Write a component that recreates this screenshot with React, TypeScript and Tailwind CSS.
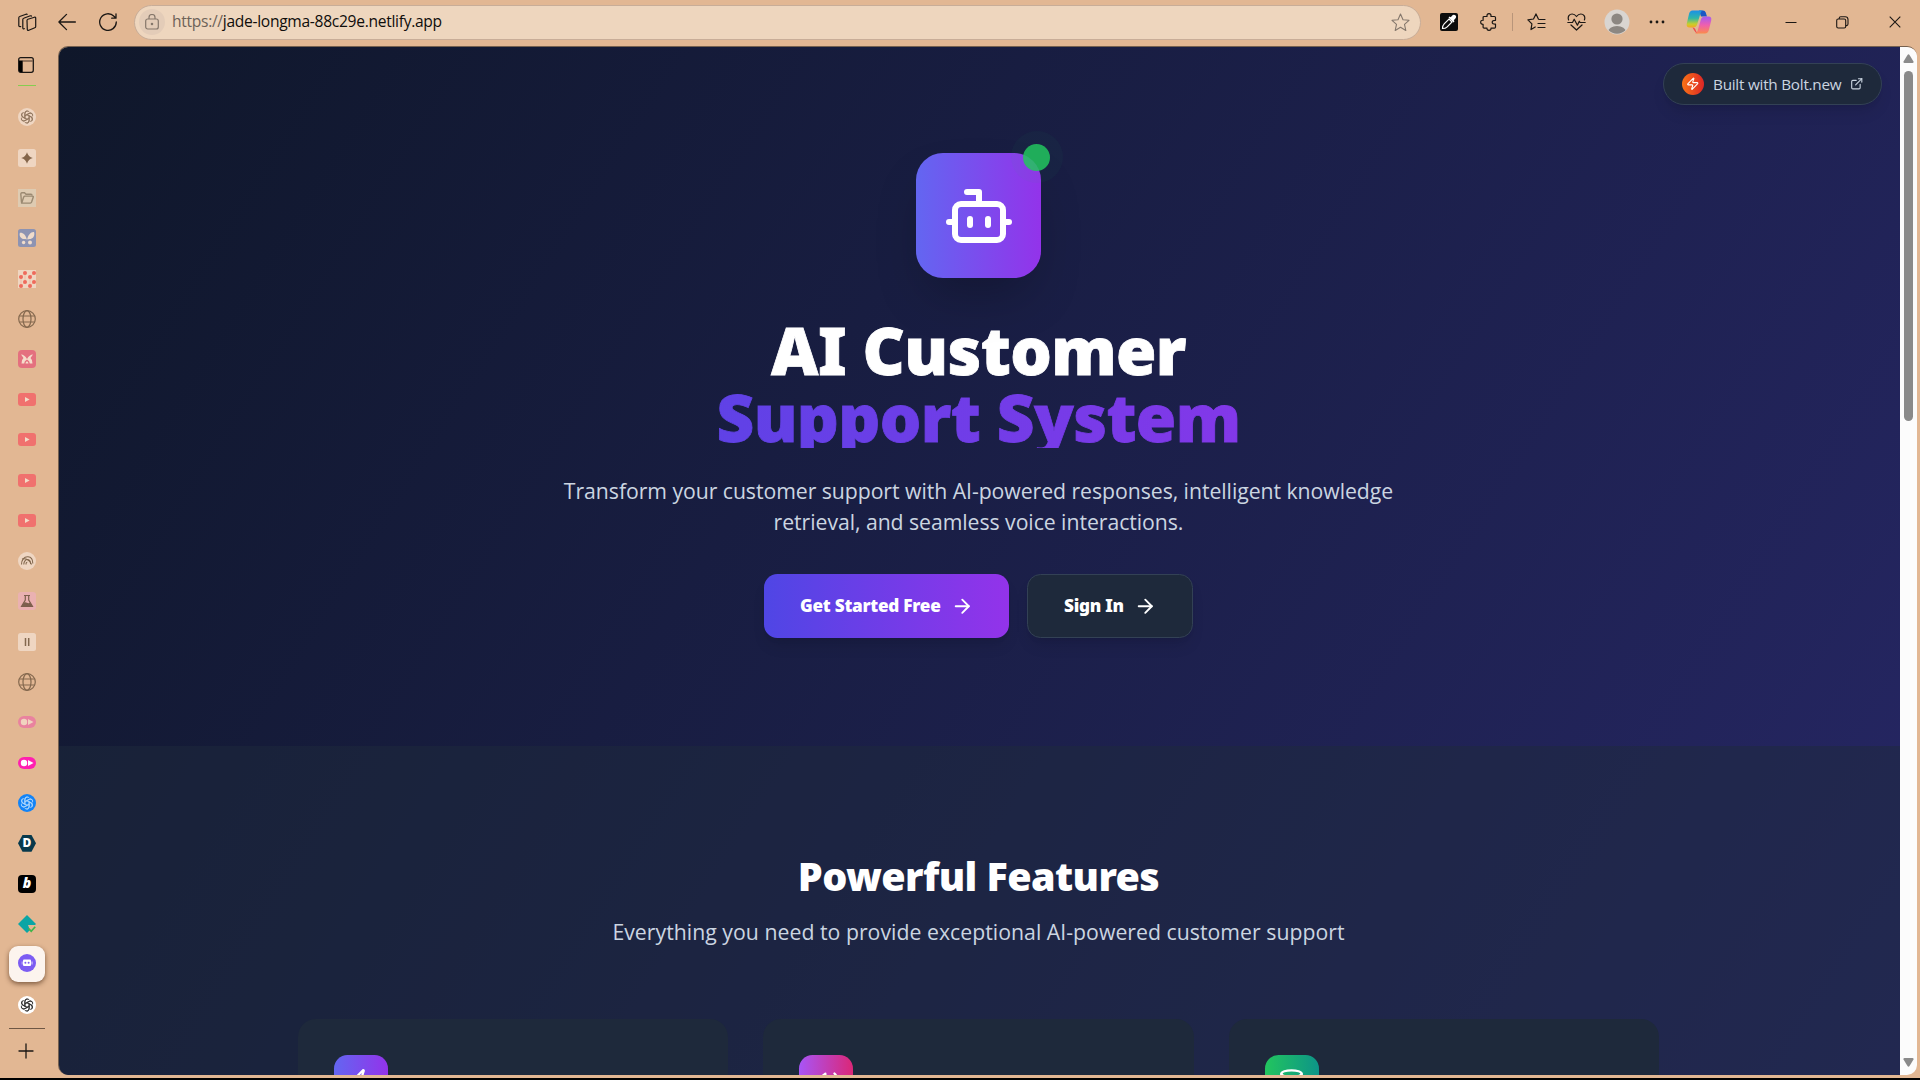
import type { ReactNode } from 'react'
import { ArrowRight, Bot, Database, ExternalLink, Plus, Zap } from 'lucide-react'

const YoutubeIcon = () => (
  <svg width="18" height="13" viewBox="0 0 18 13">
    <rect width="18" height="13" rx="3" fill="#f0716e" />
    <path d="M7 4v5l4.6-2.5z" fill="#f1dcc8" />
  </svg>
)

const GlobeIcon = () => (
  <svg width="18" height="18" viewBox="0 0 18 18" fill="none" stroke="#84684e" strokeWidth="1.2">
    <circle cx="9" cy="9" r="8.3" />
    <ellipse cx="9" cy="9" rx="4" ry="8.3" />
    <path d="M1.5 6h15M1.5 12h15" />
  </svg>
)

function KnotIcon({ bg, color }: { bg: string; color: string }) {
  return (
    <svg width="18" height="18" viewBox="0 0 18 18" fill="none">
      <circle cx="9" cy="9" r="9" fill={bg} />
      <g stroke={color} strokeWidth="1" strokeLinejoin="round">
        {[0, 60, 120, 180, 240, 300].map((angle) => (
          <path key={angle} transform={`rotate(${angle} 9 9)`} d="M6.9 10.2V5.4a2.5 2.5 0 0 1 4.4-1.5M6.9 7.8l4.1-2.4a2.5 2.5 0 0 1 3.5 1" />
        ))}
      </g>
    </svg>
  )
}

function PlayPillIcon({ bg, color }: { bg: string; color: string }) {
  return (
    <svg width="18" height="12" viewBox="0 0 18 12">
      <rect width="18" height="12" rx="6" fill={bg} />
      <circle cx="6" cy="6" r="3.2" fill={color} />
      <path d="M10 3v6l5.5-3z" fill={color} />
    </svg>
  )
}

const SparkleIcon = () => (
  <svg width="18" height="18" viewBox="0 0 18 18">
    <rect width="18" height="18" rx="2.5" fill="#efd6c2" />
    <path d="M9 3.2Q10.2 7.8 14.8 9 10.2 10.2 9 14.8 7.8 10.2 3.2 9 7.8 7.8 9 3.2z" fill="#84654a" />
  </svg>
)

const FolderIcon = () => (
  <svg width="18" height="18" viewBox="0 0 18 18" fill="none">
    <rect width="18" height="18" fill="#decbb2" />
    <path d="M3.5 13.5 2.8 5q0-1 1-1.2h2.7l1.5 1.4h5q1 0 1 1M3.7 14l2-6q.4-.9 1.3-.9h7.5q1 0 .8 1l-1.7 5q-.4 1-1.3 1H4q-.7 0-.3-.1z" stroke="#9b8a72" strokeWidth="1.4" />
  </svg>
)

const ButterflyIcon = () => (
  <svg width="18" height="18" viewBox="0 0 18 18">
    <rect width="18" height="18" rx="2.5" fill="#8d93b2" />
    <g fill="#f0dccb">
      <path d="M8.8 10.5C8 6 5 3.5 2 3.8c-1 2 0 5.7 3.5 6.2 1.5.2 2.5.1 3.3.5zM9.2 10.5C10 6 13 2.500 16 3c1 2.500-.2 6.300-3.500 7-1.500.2-2.500.1-3.300.5z" />
      <circle cx="5.6" cy="13.5" r="1.7" />
      <circle cx="12" cy="13.5" r="2" />
    </g>
  </svg>
)

const DotsGridIcon = () => (
  <svg width="18" height="18" viewBox="0 0 18 18">
    <rect width="18" height="18" fill="#efd6c2" />
    <path d="M3 7 7 3M3 16l4-4M12 7l4-4M12 16l4-4M3 7v9M12 7v9M7 3v9" stroke="#f2b29c" strokeWidth="0.7" />
    <g fill="#ee6a5b">
      <circle cx="7" cy="3" r="2" />
      <circle cx="16" cy="3" r="2" />
      <circle cx="3" cy="7" r="2" />
      <circle cx="12" cy="7" r="2" />
      <circle cx="7" cy="12" r="2" />
      <circle cx="16" cy="12" r="2" />
      <circle cx="3" cy="16" r="2" />
      <circle cx="12" cy="16" r="2" />
    </g>
  </svg>
)

const PinkMIcon = () => (
  <svg width="18" height="18" viewBox="0 0 18 18">
    <rect width="18" height="18" rx="4" fill="#e4707f" />
    <path d="M3 4.500q3.500 0 6 4.500 2.500-4.500 6-4.500L12.500 8q2 1.500 2 5.500h-2.700q0-2.500-2.800-4-2.800 1.500-2.800 4H3.500q0-4 2-5.500z" fill="#f5dccb" />
    <path d="M7.5 13.500q.2-1.800 1.500-2.300 1.300.5 1.500 2.300z" fill="#f5dccb" />
  </svg>
)

const ArcsIcon = () => (
  <svg width="18" height="18" viewBox="0 0 18 18" fill="none" stroke="#84694f" strokeWidth="1.1">
    <circle cx="9" cy="9" r="9" fill="#efd6c2" stroke="none" />
    <path d="M3.5 12.5C3.5 8 6 4.5 10 4.8c3 .2 4.8 3 4.8 6.7M5.8 12.5c0-3 1.7-5.2 4-4.9 1.9.2 2.8 2 2.800 4.400M8 12.500c0-1.500.4-2.400 1.300-2.300" />
    <path d="M4 7c4-1 8 1 9.5 5.5" />
  </svg>
)

const FlaskIcon = () => (
  <svg width="18" height="18" viewBox="0 0 18 18" fill="none">
    <rect width="18" height="18" rx="3" fill="#eab1b1" />
    <path d="M6 3.5h6M7.3 3.5V8L3.5 14.5h11L10.7 8V3.5" stroke="#7d5f4d" strokeWidth="1.2" />
    <path d="M6 10.5q1.5-.8 3 .2t3-.2l2.5 4h-11z" fill="#7d5f4d" />
  </svg>
)

const PauseIcon = () => (
  <svg width="18" height="18" viewBox="0 0 18 18">
    <rect width="18" height="18" rx="2.5" fill="#efd6c2" />
    <path d="M7.5 5v8M10.7 5v8" stroke="#84694f" strokeWidth="1.5" />
  </svg>
)

const HexDIcon = () => (
  <span className="grid h-[18px] w-[18px] place-items-center bg-[#07394c] text-[12px] font-extrabold text-white [clip-path:polygon(25%_3%,75%_3%,100%_50%,75%_97%,25%_97%,0_50%)]">
    D
  </span>
)

const BoltBIcon = () => (
  <span className="grid h-[18px] w-[18px] place-items-center rounded-[4px] bg-black pb-px text-[14px] font-extrabold leading-none text-white italic">
    b
  </span>
)

const DiamondIcon = () => (
  <svg width="18" height="18" viewBox="0 0 18 18" fill="none">
    <path d="M9 0l9 9-9 9-9-9z" fill="#0aa5a5" />
    <path d="M10 10h8v8h-5z" fill="#e2b793" />
    <path d="M10.5 13.5l2.7 2.7 4-4.4" stroke="#3fb54a" strokeWidth="1.7" />
  </svg>
)

const BotTabIcon = () => (
  <svg width="18" height="18" viewBox="0 0 18 18">
    <circle cx="9" cy="9" r="9" fill="#7c5cf2" />
    <path d="M3.5 7.5h11.500v3H3.500z" fill="#fff" opacity="0.4" />
    <rect x="5" y="5.5" width="8" height="6.5" rx="1" fill="#fff" />
    <circle cx="7.4" cy="8.7" r="1" fill="#7c5cf2" />
    <circle cx="10.6" cy="8.7" r="1" fill="#7c5cf2" />
  </svg>
)

const tabs: { id: string; icon: ReactNode; active?: boolean }[] = [
  { id: 'chat', icon: <KnotIcon bg="#efd6c2" color="#937860" /> },
  { id: 'sparkle', icon: <SparkleIcon /> },
  { id: 'folder', icon: <FolderIcon /> },
  { id: 'butterfly', icon: <ButterflyIcon /> },
  { id: 'dots', icon: <DotsGridIcon /> },
  { id: 'globe-1', icon: <GlobeIcon /> },
  { id: 'pink-m', icon: <PinkMIcon /> },
  { id: 'video-1', icon: <YoutubeIcon /> },
  { id: 'video-2', icon: <YoutubeIcon /> },
  { id: 'video-3', icon: <YoutubeIcon /> },
  { id: 'video-4', icon: <YoutubeIcon /> },
  { id: 'arcs', icon: <ArcsIcon /> },
  { id: 'flask', icon: <FlaskIcon /> },
  { id: 'pause', icon: <PauseIcon /> },
  { id: 'globe-2', icon: <GlobeIcon /> },
  { id: 'pill-1', icon: <PlayPillIcon bg="#e9829f" color="#f0d3bf" /> },
  { id: 'pill-2', icon: <PlayPillIcon bg="#ff1fb0" color="#fff" /> },
  { id: 'knot-blue', icon: <KnotIcon bg="#1283f7" color="#a9d3fb" /> },
  { id: 'hex', icon: <HexDIcon /> },
  { id: 'b', icon: <BoltBIcon /> },
  { id: 'diamond', icon: <DiamondIcon /> },
  { id: 'bot', icon: <BotTabIcon />, active: true },
  { id: 'knot', icon: <KnotIcon bg="#fff" color="#333" /> },
]

const VolumeIcon = () => (
  <svg width="27" height="27" viewBox="0 0 24 24" fill="none" stroke="#fff" strokeWidth="2" strokeLinecap="round" strokeLinejoin="round">
    <path d="M11 5 6 9H2v6h4l5 4z" />
    <path d="M15.54 8.46a5 5 0 0 1 0 7.07M19.07 4.93a10 10 0 0 1 0 14.14" />
  </svg>
)

const features = [
  { id: 'speed', tile: 'bg-linear-to-r/srgb from-[#6366f1] to-[#9333ea]', icon: <Zap size={27} /> },
  { id: 'voice', tile: 'bg-linear-to-r/srgb from-[#a855f7] to-[#db2777]', icon: <VolumeIcon /> },
  { id: 'knowledge', tile: 'bg-linear-to-r/srgb from-[#22c55e] to-[#0d9488]', icon: <Database size={27} /> },
]

function Toolbar() {
  return (
    <header className="flex h-[46px] shrink-0 items-center pb-[2px] text-[#1b1714]">
      <svg className="ml-[18px]" width="19" height="19" viewBox="0 0 19 19" fill="none" stroke="currentColor" strokeWidth="1.2" strokeLinejoin="round">
        <path d="M9 7.5q0-1 .9-1.3l6.600-2q1.200-.3 1.200.9v8.300q0 1-.9 1.300l-6 2.600q-1.300.5-1.500-.8z" />
        <path d="M6.800 15.500q-1.800 1-2-.5V6.500q0-1 .9-1.300l6.600-2.400q1.100-.3 1.300.8" />
        <path d="M3.200 13.500q-2 .5-2.400-.8V4.800q0-1 .9-1.300L8 1.200q1.100-.3 1.400.6" />
      </svg>
      <svg className="ml-[21px]" width="18" height="18" viewBox="0 0 18 18" fill="none" stroke="currentColor" strokeWidth="1.3" strokeLinecap="round" strokeLinejoin="round">
        <path d="M17.4 9H.9M8.500 1.400.9 9l7.600 7.600" />
      </svg>
      <svg className="ml-[23px]" width="18" height="18" viewBox="0 0 18 18" fill="none" stroke="currentColor" strokeWidth="1.3" strokeLinecap="round" strokeLinejoin="round">
        <path d="M17.3 9A8.300 8.300 0 1 1 15 3.300L16.800 5M17 .8V5.200H12.700" />
      </svg>

      <div className="ml-[17px] flex h-[35px] w-[1287px] items-center rounded-full border border-[#c8ad98] bg-[#eed6be] pr-[10px] pl-[4px]">
        <span className="grid h-[26px] w-[26px] place-items-center rounded-full bg-[#e3ccb8] text-[#85776b]">
          <svg width="14" height="16" viewBox="0 0 14 16" fill="none" stroke="currentColor" strokeWidth="1.2">
            <rect x="0.7" y="5" width="12.6" height="10" rx="2" />
            <path d="M4 5V3.5a3 3 0 0 1 6 0V5" />
            <circle cx="7" cy="10" r="0.7" fill="currentColor" />
          </svg>
        </span>
        <span className="ml-[7px] grow text-[15.6px] tracking-[-0.3px] whitespace-nowrap text-[#0f0d0b]">
          <span className="text-[#6d6258]">https://</span>jade-longma-88c29e.netlify.app
        </span>
        <svg width="19" height="19" viewBox="0 0 19 19" fill="none" stroke="#84776c" strokeWidth="1.1" strokeLinejoin="round">
          <path d="M9.500 1l2.500 5.700 6 .6-4.500 4.100 1.300 6.100-5.300-3.200-5.300 3.200 1.300-6.100L1 7.300l6-.6z" />
        </svg>
      </div>

      <svg className="ml-[19px]" width="18" height="18" viewBox="0 0 18 18">
        <rect width="18" height="18" rx="2" fill="#0c0c0c" />
        <path d="M2.500 15.500q0-3 1.700-4.700L9 6l3 3-4.800 4.800Q5.500 15.500 2.500 15.500z" fill="#0c0c0c" stroke="#fff" strokeWidth="1.2" />
        <path d="M8.500 4.500l5 5 1-1.200-.7-1 2-2.300q.9-1.600-.4-2.700t-2.600-.2L10.700 4.200l-1-.8z" fill="#fff" />
      </svg>
      <svg className="ml-[22px]" width="18" height="18" viewBox="0 0 18 18" fill="none" stroke="currentColor" strokeWidth="1.2" strokeLinejoin="round">
        <path d="M4.200 3.500H7q-.3-2.800 2-2.800t2 2.800h3.400q1.100 0 1.100 1.100v2.700q-3.300-.2-3.300 1.900t3.300 1.900v2.900q0 1.100-1.100 1.100H11q.2 2.200-2 2.200t-2-2.200H4.200q-1.100 0-1.100-1.100v-2.700Q.7 11.400.7 9.200t2.400-1.900V4.600q0-1.100 1.100-1.100z" />
      </svg>
      <span className="ml-[14px] h-[18px] w-px bg-[#b8957a]" />
      <svg className="ml-[14px]" width="19" height="18" viewBox="0 0 19 18" fill="none" stroke="currentColor" strokeWidth="1.2" strokeLinejoin="round" strokeLinecap="round">
        <path d="M11.500 6.200 9 .9 6.500 6l-5.600.8 4 4-.9 5.800L8.200 14M12.500 6.500H18M11 10.500h7M11 14.500h7" />
      </svg>
      <svg className="ml-[21px]" width="19" height="18" viewBox="0 0 19 18" fill="none" stroke="currentColor" strokeWidth="1.2" strokeLinejoin="round" strokeLinecap="round">
        <path d="M1.600 7C.3 3.500 2.500 1 5.200 1 7.500 1 8.800 2.600 9.500 3.500 10.200 2.600 11.500 1 13.800 1c2.700 0 4.900 2.500 3.600 6M4 12l5.500 5 5.500-5M.8 9.500h4.700l1.700-3.300 3.200 6 1.900-4 .8 1.300h5.100" />
      </svg>
      <svg className="ml-[18px]" width="26" height="26" viewBox="0 0 26 26">
        <clipPath id="avatar">
          <circle cx="13" cy="13" r="11.8" />
        </clipPath>
        <circle cx="13" cy="13" r="12.5" fill="#d9d5d1" />
        <g clipPath="url(#avatar)" fill="#8c8782">
          <circle cx="13" cy="10" r="5.6" />
          <ellipse cx="13" cy="23" rx="9" ry="6" />
        </g>
      </svg>
      <svg className="ml-[19px]" width="16" height="4" viewBox="0 0 16 4" fill="currentColor">
        <circle cx="2" cy="2" r="1.4" />
        <circle cx="8" cy="2" r="1.4" />
        <circle cx="14" cy="2" r="1.4" />
      </svg>
      <svg className="ml-[21px]" width="26" height="24" viewBox="0 0 26 24">
        <defs>
          <linearGradient id="copilotLeft" x1="0" y1="0" x2="0" y2="1">
            <stop offset="0" stopColor="#1a90e8" />
            <stop offset="0.45" stopColor="#2fb6a8" />
            <stop offset="0.8" stopColor="#c9cf2c" />
            <stop offset="1" stopColor="#f5a623" />
          </linearGradient>
          <linearGradient id="copilotRight" x1="0" y1="0" x2="0" y2="1">
            <stop offset="0" stopColor="#a45bf0" />
            <stop offset="0.5" stopColor="#ee5fb0" />
            <stop offset="1" stopColor="#fb8a4c" />
          </linearGradient>
        </defs>
        <path d="M13 .5h4q2 0 2.700 2l1.300 4h-6z" fill="#1b57c4" />
        <path d="M6.500.5H17q-1.800.3-2.400 2.500l-3.300 11Q10.300 17.500 7 17.500H3.500Q0 17.500.8 13.500L3 4q.8-3.500 3.500-3.500z" fill="url(#copilotLeft)" />
        <path d="M6.500 17.500q2.500 0 3.300 3 .8 3 3 3-3.300 0-4.200-2.500z" fill="#ef4b4b" />
        <path d="M19 6.500h3.500q3.500 0 2.700 4L23 19.500q-.9 4-4 4H9q1.800-.3 2.500-2.500l3.300-11.300Q15.800 6.500 19 6.500z" fill="url(#copilotRight)" />
      </svg>

      <svg className="ml-[73px]" width="12" height="12" viewBox="0 0 12 12" stroke="currentColor">
        <path d="M.5 6.500h11" />
      </svg>
      <svg className="ml-[39px]" width="13" height="13" viewBox="0 0 13 13" fill="none" stroke="currentColor" strokeWidth="1.1">
        <rect x="0.7" y="3" width="9" height="9" rx="1.5" />
        <path d="M3.200 3V2.300q0-1.500 1.600-1.500h4.400q2.800 0 2.800 2.800V8q0 1.600-1.500 1.600H9.700" />
      </svg>
      <svg className="ml-[40px]" width="12" height="12" viewBox="0 0 12 12" stroke="currentColor" strokeWidth="1.1">
        <path d="M.7.7l10.600 10.600M11.300.7.7 11.300" />
      </svg>
    </header>
  )
}

function Sidebar() {
  return (
    <nav className="flex w-[58px] shrink-0 flex-col">
      <div className="flex w-[54px] flex-col items-center">
        <svg className="mt-[11px] mr-[2px]" width="16" height="16" viewBox="0 0 16 16" fill="none">
          <rect x="0.7" y="0.7" width="14.6" height="14.6" rx="2" stroke="#1b1714" strokeWidth="1.3" />
          <path d="M4.500 4H15" stroke="#7a5f4b" strokeWidth="1.5" />
          <path d="M1 3.500h3.700V15H2.500Q1 15 1 13.500z" fill="#000" />
        </svg>
        <span className="mt-[12px] h-px w-[18px] bg-[#86cc50]" />
        <div className="mt-[11px] flex flex-col">
          {tabs.map((tab) => (
            <div key={tab.id} className="grid h-[40.35px] w-[54px] place-items-center">
              {tab.active ? (
                <div className="grid h-[36px] w-[36px] place-items-center rounded-[9px] bg-[#fcf4ee] pb-[2px] shadow-[0_2px_5px_rgba(60,30,10,0.6)]">
                  {tab.icon}
                </div>
              ) : (
                tab.icon
              )}
            </div>
          ))}
        </div>
        <span className="mt-[3px] h-px w-[36px] bg-[#6e5744]" />
        <Plus className="mt-[10px] mr-[2px] text-[#1b1714]" size={24} strokeWidth={1.3} />
      </div>
    </nav>
  )
}

function BoltBadge() {
  return (
    <a className="absolute top-[16px] right-[18px] flex h-[42px] w-[219px] items-center rounded-full border border-[#334155] bg-[#1e293b] pl-[18px] text-[#cbd5e1] shadow-lg">
      <span className="grid h-[22px] w-[22px] place-items-center rounded-full bg-linear-to-r/srgb from-[#f97316] to-[#dc2626] text-white">
        <Zap size={13.5} />
      </span>
      <span className="ml-[9px] text-[15.3px] tracking-[-0.25px] whitespace-nowrap">Built with Bolt.new</span>
      <ExternalLink className="ml-[9px]" size={13.5} />
    </a>
  )
}

function Hero() {
  return (
    <section className="relative flex h-[699px] shrink-0 flex-col items-center pt-[106px] pr-[2px]">
      <BoltBadge />
      <div className="relative grid h-[125px] w-[125px] shrink-0 place-items-center rounded-[27px] bg-linear-to-r/srgb from-[#6366f1] to-[#9333ea] shadow-2xl">
        <Bot size={72} className="text-white" />
        <span className="absolute -top-[22px] -right-[22px] h-[52px] w-[52px] rounded-full bg-[#22c55e]/4" />
        <span className="absolute -top-[9px] -right-[9px] h-[27px] w-[27px] rounded-full bg-[#22c55e]/85" />
      </div>

      <h1 className="mt-[35px] flex w-[1008px] flex-col text-center font-['Noto_Sans'] text-[65.4px] leading-[67.5px] font-black tracking-[-0.6px] whitespace-nowrap text-white [-webkit-text-stroke-width:0.8px]">
        <span className="block h-[67.5px] pt-[2.5px]">AI Customer</span>
        <span className="block h-[67.5px] bg-linear-to-r/srgb from-[#4f46e5] to-[#9333ea] bg-clip-text pt-[2.5px] text-transparent">
          Support System
        </span>
      </h1>

      <p className="mt-[27px] text-center text-[21.25px] leading-[31px] tracking-[-0.06px] whitespace-nowrap text-[#cbd5e1]">
        Transform your customer support with AI-powered responses, intelligent knowledge
        <br />
        retrieval, and seamless voice interactions.
      </p>

      <div className="mt-[37px] flex gap-[18px] font-['Noto_Sans'] text-[17.2px] font-black tracking-[-0.25px] whitespace-nowrap text-white">
        <button className="flex h-[64px] w-[245px] items-center justify-between rounded-[13.5px] bg-linear-to-r/srgb from-[#4f46e5] to-[#9333ea] px-[36px] shadow-lg">
          Get Started Free
          <ArrowRight size={22.5} />
        </button>
        <button className="flex h-[64px] w-[166px] items-center justify-between rounded-[13.5px] border border-[#334155] bg-[#1e293b] px-[36px] shadow-lg">
          Sign In
          <ArrowRight size={22.5} />
        </button>
      </div>
    </section>
  )
}

function Features() {
  return (
    <section className="flex grow flex-col items-center bg-[#1e293b]/50 pt-[108px] pr-[2px]">
      <h2 className="font-['Noto_Sans'] text-[39.5px] leading-[45px] font-black tracking-[-0.6px] whitespace-nowrap text-white">Powerful Features</h2>
      <p className="mt-[17px] text-[21.25px] leading-[31.5px] tracking-[0.02px] whitespace-nowrap text-[#cbd5e1]">
        Everything you need to provide exceptional AI-powered customer support
      </p>
      <div className="mt-[71px] grid w-[1361px] grid-cols-3 gap-[35px]">
        {features.map((feature) => (
          <div key={feature.id} className="h-[260px] rounded-[18px] bg-[#1e293b] p-[36px]">
            <div className={`grid h-[54px] w-[54px] place-items-center rounded-[13.5px] text-white ${feature.tile}`}>{feature.icon}</div>
          </div>
        ))}
      </div>
    </section>
  )
}

function Scrollbar() {
  return (
    <div className="flex w-[17px] shrink-0 flex-col items-center rounded-r-[8px] bg-[#fcfcfc] pt-[7px] pb-[8px]">
      <svg width="11" height="9" viewBox="0 0 11 9" fill="#8a8a8a">
        <path d="M4.500 1q1-1.500 2 0l4 6.500q.4 1.500-1 1.500h-8Q.1 9 .5 7.500z" />
      </svg>
      <span className="mt-[8px] h-[350px] w-[9px] rounded-full bg-[#8a8a8a]" />
      <svg className="mt-auto" width="11" height="9" viewBox="0 0 11 9" fill="#8a8a8a">
        <path d="M4.500 8q1 1.500 2 0l4-6.500Q10.900 0 9.500 0h-8Q.1 0 .5 1.500z" />
      </svg>
    </div>
  )
}

export default function App() {
  return (
    <div className="flex h-[1080px] w-[1920px] flex-col overflow-hidden border-b-2 border-black bg-[#e2b793] font-['Open_Sans','Noto_Sans',sans-serif]">
      <Toolbar />
      <div className="flex h-[1029px] shrink-0">
        <Sidebar />
        <div className="flex w-[1859px] overflow-hidden rounded-[10px] border-t border-l border-[#75604f]">
          <main className="flex h-[1028px] grow flex-col overflow-hidden bg-[linear-gradient(to_bottom_right,#0f172a,#312e81)] bg-[length:100%_2900px] bg-no-repeat">
            <Hero />
            <Features />
          </main>
          <Scrollbar />
        </div>
      </div>
    </div>
  )
}
